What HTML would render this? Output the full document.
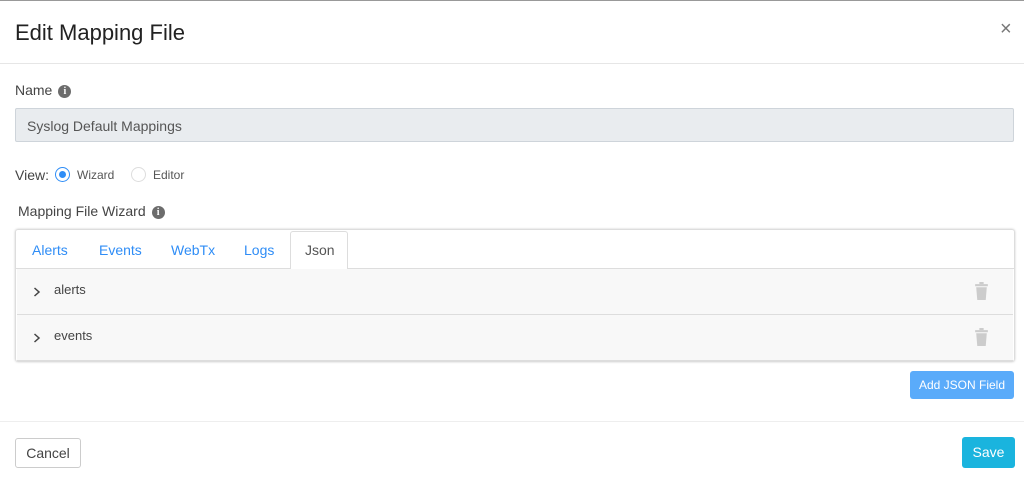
<!DOCTYPE html><html><head><style>
*{box-sizing:border-box;margin:0;padding:0}
body{width:1024px;height:481px;background:#fff;font-family:"Liberation Sans",sans-serif;position:relative;overflow:hidden;color:#212529;border-top:1px solid #999}
.a{position:absolute}
.info{display:inline-block;width:13px;height:13px;border-radius:50%;background:#6c6c6c;color:#fff;font-size:10px;font-weight:bold;text-align:center;line-height:13px;font-family:"Liberation Serif",serif;vertical-align:1px;margin-left:6px}
.tab{position:absolute;top:12px;font-size:14px;color:#2f8df6}
.row{position:absolute;left:1px;right:1px;height:46px;background:#f8f8f8;border-bottom:1px solid #ddd;font-size:13px;color:#444}
.trash{position:absolute;right:25px;top:13px;width:13px;height:18px}
.chev{position:absolute;left:16px;top:18px;width:8px;height:10px}
</style></head><body>
<div class="a" style="left:15px;top:19px;font-size:22px;color:#222">Edit Mapping File</div>
<div class="a" style="left:1000px;top:17px;font-size:20px;color:#777">×</div>
<div class="a" style="left:0;right:0;top:62px;border-top:1px solid #e6e6e6"></div>
<div class="a" style="left:15px;top:81px;font-size:14px;color:#444">Name<span class="info">i</span></div>
<div class="a" style="left:15px;top:107px;width:999px;height:34px;background:#e9ecef;border:1px solid #ced4da;border-radius:2px;font-size:14px;color:#555;padding:9px 11px">Syslog Default Mappings</div>
<div class="a" style="left:15px;top:166px;font-size:14px;color:#444">View:</div>
<div class="a" style="left:55px;top:166px;width:15px;height:15px;border-radius:50%;border:1px solid #2f8df6;background:#fff"><div style="width:7px;height:7px;border-radius:50%;background:#2f8df6;margin:3px"></div></div>
<div class="a" style="left:77px;top:167px;font-size:12px;color:#555">Wizard</div>
<div class="a" style="left:131px;top:166px;width:15px;height:15px;border-radius:50%;border:1px solid #ddd"></div>
<div class="a" style="left:153px;top:167px;font-size:12px;color:#555">Editor</div>
<div class="a" style="left:18px;top:202px;font-size:14px;color:#444">Mapping File Wizard<span class="info">i</span></div>
<div class="a" style="left:15px;top:228px;width:1000px;height:133px;border:1px solid #ddd;border-radius:3px;box-shadow:0 0 2px #ccc">
 <div class="a" style="left:0;right:0;top:38px;border-top:1px solid #ddd"></div>
 <div class="tab" style="left:16px">Alerts</div>
 <div class="tab" style="left:83px">Events</div>
 <div class="tab" style="left:155px">WebTx</div>
 <div class="tab" style="left:228px">Logs</div>
 <div class="a" style="left:274px;top:1px;width:58px;height:38px;background:#fff;border:1px solid #ddd;border-bottom:none;border-radius:3px 3px 0 0;font-size:14px;color:#555;padding:10px 0 0 14px">Json</div>
 <div class="row" style="top:39px"><svg class="chev" viewBox="0 0 8 10"><path d="M1.5 1l4.5 4-4.5 4" fill="none" stroke="#444" stroke-width="1.5"/></svg><span class="a" style="left:37px;top:13px">alerts</span><svg class="trash" viewBox="0 0 12 17"><rect x="0" y="2" width="12" height="2" fill="#ccc"/><rect x="4" y="0" width="4" height="2" fill="#ccc"/><path d="M1 5h10l-1 12H2z" fill="#ccc"/></svg></div>
 <div class="row" style="top:85px"><svg class="chev" viewBox="0 0 8 10"><path d="M1.5 1l4.5 4-4.5 4" fill="none" stroke="#444" stroke-width="1.5"/></svg><span class="a" style="left:37px;top:13px">events</span><svg class="trash" viewBox="0 0 12 17"><rect x="0" y="2" width="12" height="2" fill="#ccc"/><rect x="4" y="0" width="4" height="2" fill="#ccc"/><path d="M1 5h10l-1 12H2z" fill="#ccc"/></svg></div>
</div>
<div class="a" style="left:910px;top:370px;width:104px;height:28px;background:#5aabfa;border-radius:3px;color:#fff;font-size:12px;text-align:center;line-height:28px">Add JSON Field</div>
<div class="a" style="left:0;right:0;top:420px;border-top:1px solid #eee"></div>
<div class="a" style="left:15px;top:437px;width:66px;height:30px;border:1px solid #ccc;border-radius:3px;font-size:14px;color:#444;text-align:center;line-height:28px">Cancel</div>
<div class="a" style="left:962px;top:436px;width:53px;height:31px;background:#1ab4de;border-radius:3px;font-size:14px;color:#fff;text-align:center;line-height:31px">Save</div>
</body></html>
